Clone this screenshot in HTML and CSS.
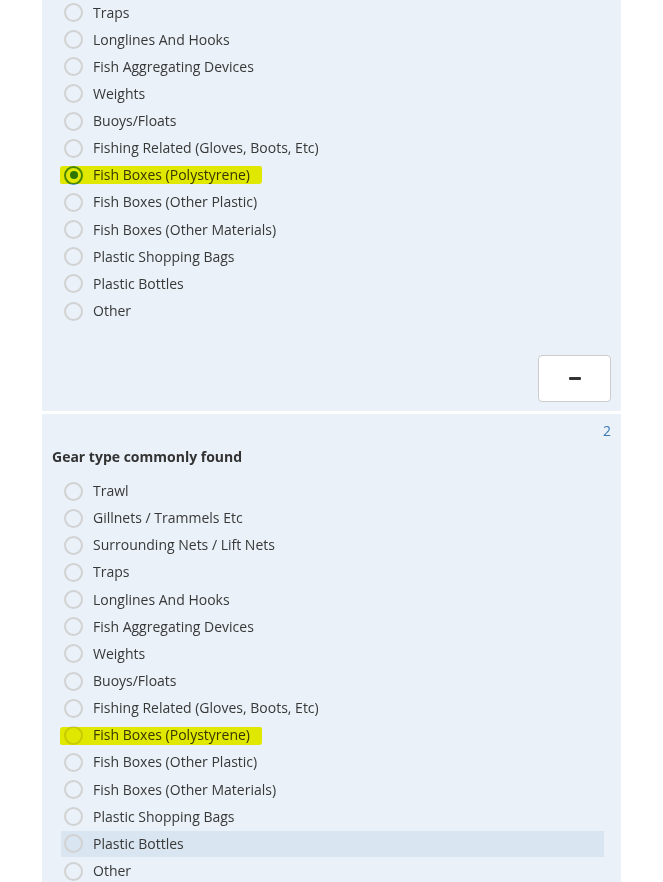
FILE: index.html
```html
<!DOCTYPE html>
<html>
<head>
<meta charset="utf-8">
<link rel="stylesheet" href="styles.css">
</head>
<body>
<div class="page">
  <section class="panel panel-first">
    <ul class="options options-first">
      <li class="option"><span class="radio"></span><span class="label">Traps</span></li>
      <li class="option"><span class="radio"></span><span class="label">Longlines And Hooks</span></li>
      <li class="option"><span class="radio"></span><span class="label">Fish Aggregating Devices</span></li>
      <li class="option"><span class="radio"></span><span class="label">Weights</span></li>
      <li class="option"><span class="radio"></span><span class="label">Buoys/Floats</span></li>
      <li class="option"><span class="radio"></span><span class="label">Fishing Related (Gloves, Boots, Etc)</span></li>
      <li class="option"><span class="radio checked"></span><span class="label">Fish Boxes (Polystyrene)</span><span class="marker"></span></li>
      <li class="option"><span class="radio"></span><span class="label">Fish Boxes (Other Plastic)</span></li>
      <li class="option"><span class="radio"></span><span class="label">Fish Boxes (Other Materials)</span></li>
      <li class="option"><span class="radio"></span><span class="label">Plastic Shopping Bags</span></li>
      <li class="option"><span class="radio"></span><span class="label">Plastic Bottles</span></li>
      <li class="option"><span class="radio"></span><span class="label">Other</span></li>
    </ul>
    <div class="actions">
      <button class="remove-btn" type="button" aria-label="Remove"><span class="minus"></span></button>
    </div>
  </section>
  <section class="panel panel-second">
    <div class="index">2</div>
    <h3 class="question">Gear type commonly found</h3>
    <ul class="options">
      <li class="option"><span class="radio"></span><span class="label">Trawl</span></li>
      <li class="option"><span class="radio"></span><span class="label">Gillnets / Trammels Etc</span></li>
      <li class="option"><span class="radio"></span><span class="label">Surrounding Nets / Lift Nets</span></li>
      <li class="option"><span class="radio"></span><span class="label">Traps</span></li>
      <li class="option"><span class="radio"></span><span class="label">Longlines And Hooks</span></li>
      <li class="option"><span class="radio"></span><span class="label">Fish Aggregating Devices</span></li>
      <li class="option"><span class="radio"></span><span class="label">Weights</span></li>
      <li class="option"><span class="radio"></span><span class="label">Buoys/Floats</span></li>
      <li class="option"><span class="radio"></span><span class="label">Fishing Related (Gloves, Boots, Etc)</span></li>
      <li class="option"><span class="radio"></span><span class="label">Fish Boxes (Polystyrene)</span><span class="marker marker-low"></span></li>
      <li class="option"><span class="radio"></span><span class="label">Fish Boxes (Other Plastic)</span></li>
      <li class="option"><span class="radio"></span><span class="label">Fish Boxes (Other Materials)</span></li>
      <li class="option"><span class="radio"></span><span class="label">Plastic Shopping Bags</span></li>
      <li class="option hover"><span class="radio"></span><span class="label">Plastic Bottles</span></li>
      <li class="option"><span class="radio"></span><span class="label">Other</span></li>
    </ul>
  </section>
</div>
</body>
</html>
```
FILE: styles.css
```css
html, body {
  margin: 0;
  padding: 0;
  background: #ffffff;
}
body {
  font-family: "Open Sans", "Liberation Sans", sans-serif;
  font-size: 14px;
  color: #383838;
  overflow: hidden;
}
.page {
  margin: 0 42px;
  display: flex;
  flex-direction: column;
  gap: 3px;
}
.panel {
  background: #eaf1f8;
  padding: 0 10px;
}
.panel-first {
  padding-bottom: 9px;
}
.panel-second {
  padding-top: 7px;
  min-height: 480px;
}
.options {
  list-style: none;
  margin: 0;
  padding: 0 7px 0 9px;
  display: flex;
  flex-direction: column;
  gap: 1.15px;
}
.options-first {
  margin-top: -0.5px;
}
.option {
  position: relative;
  display: flex;
  align-items: center;
  height: 26px;
  padding-left: 3px;
}
.option.hover {
  background: #d9e5f0;
}
.radio {
  box-sizing: border-box;
  width: 19px;
  height: 19px;
  border: 2px solid #d2d2d2;
  border-radius: 50%;
  background: transparent;
  flex: none;
  display: flex;
  align-items: center;
  justify-content: center;
}
.radio.checked {
  border-color: #4f8cc4;
}
.radio.checked::after {
  content: "";
  width: 8px;
  height: 8px;
  border-radius: 50%;
  background: #2f78b8;
}
.label {
  margin-left: 10px;
  line-height: 20px;
  white-space: nowrap;
}
.marker {
  position: absolute;
  left: -1px;
  top: 4px;
  width: 202px;
  height: 18px;
  background: #f4f600;
  mix-blend-mode: multiply;
  border-radius: 3px 2px 3px 2px;
  pointer-events: none;
}
.marker-low {
  top: 5px;
}
.actions {
  display: flex;
  justify-content: flex-end;
  margin-top: 31px;
}
.remove-btn {
  box-sizing: border-box;
  width: 73px;
  height: 47px;
  background: #ffffff;
  border: 1px solid #cccccc;
  border-radius: 4px;
  padding: 0;
  display: flex;
  align-items: center;
  justify-content: center;
}
.minus {
  display: block;
  width: 12px;
  height: 3px;
  background: #333333;
  border-radius: 1px;
}
.index {
  text-align: right;
  line-height: 20px;
  color: #3a79b8;
}
.question {
  margin: 6px 0 11px;
  font-size: 14px;
  font-weight: 700;
  line-height: 20px;
  color: #333333;
}
```
